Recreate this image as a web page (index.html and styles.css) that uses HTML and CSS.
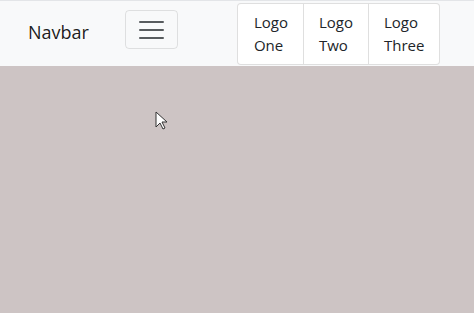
FILE: index.html
```html
<!DOCTYPE html>
<html>
<head>
  <meta charset="UTF-8">
  <title>Navbar</title>
  <link rel="stylesheet" href="styles.css">
</head>
<body>
  <nav class="navbar">
    <a class="navbar-brand" href="#">Navbar</a>
    <button class="navbar-toggler" type="button">
      <svg class="toggler-icon" viewBox="0 0 30 30">
        <path d="M4 7h23M4 15h23M4 23h23" stroke="rgba(33,37,41,0.75)" stroke-width="2" stroke-linecap="round"/>
      </svg>
    </button>
    <ul class="logo-group">
      <li class="logo-item">Logo<br>One</li>
      <li class="logo-item">Logo<br>Two</li>
      <li class="logo-item">Logo<br>Three</li>
    </ul>
  </nav>

  <main class="page-body"></main>

  <!-- mouse pointer -->
  <svg class="cursor" width="14" height="20" viewBox="0 0 14 20">
    <path d="M1 1v15l4-4 3 6 2-1-3-6h5z" fill="#fff" stroke="#333" stroke-width="1" stroke-linejoin="round"/>
  </svg>
</body>
</html>
```

FILE: styles.css
```css
* {
  box-sizing: border-box;
}

html, body {
  height: 100%;
}

body {
  margin: 0;
  font-family: "Open Sans", "Noto Sans", sans-serif;
  color: #212529;
  background: #cdc4c4;
  display: flex;
  flex-direction: column;
  overflow: hidden;
}

.navbar {
  display: flex;
  align-items: center;
  height: 66px;
  padding: 0 0 0 28px;
  background: #f8f9fa;
  border-top: 1px solid #e3e5e8;
  flex-shrink: 0;
}

.navbar-brand {
  font-size: 18px;
  color: rgba(0, 0, 0, 0.9);
  text-decoration: none;
  margin-right: 36px;
  margin-top: -4px;
}

.navbar-toggler {
  width: 53px;
  height: 39px;
  padding: 0;
  margin-top: -8px;
  background: transparent;
  border: 1px solid rgba(0, 0, 0, 0.1);
  border-radius: 4px;
  display: flex;
  align-items: center;
  justify-content: center;
}

.toggler-icon {
  width: 30px;
  height: 30px;
}

.logo-group {
  display: flex;
  list-style: none;
  margin: 2px 0 0 59px;
  padding: 0;
  align-self: flex-start;
}

.logo-item {
  background: #fff;
  border: 1px solid rgba(0, 0, 0, 0.125);
  border-left-width: 0;
  padding: 7px 15px;
  font-size: 15px;
  line-height: 23px;
}

.logo-item:first-child {
  border-left-width: 1px;
  padding-left: 16px;
  border-radius: 4px 0 0 4px;
}

.logo-item:last-child {
  border-radius: 0 4px 4px 0;
}

.page-body {
  flex: 1;
  background: #cdc4c4;
}

.cursor {
  position: absolute;
  left: 155px;
  top: 111px;
}
```
